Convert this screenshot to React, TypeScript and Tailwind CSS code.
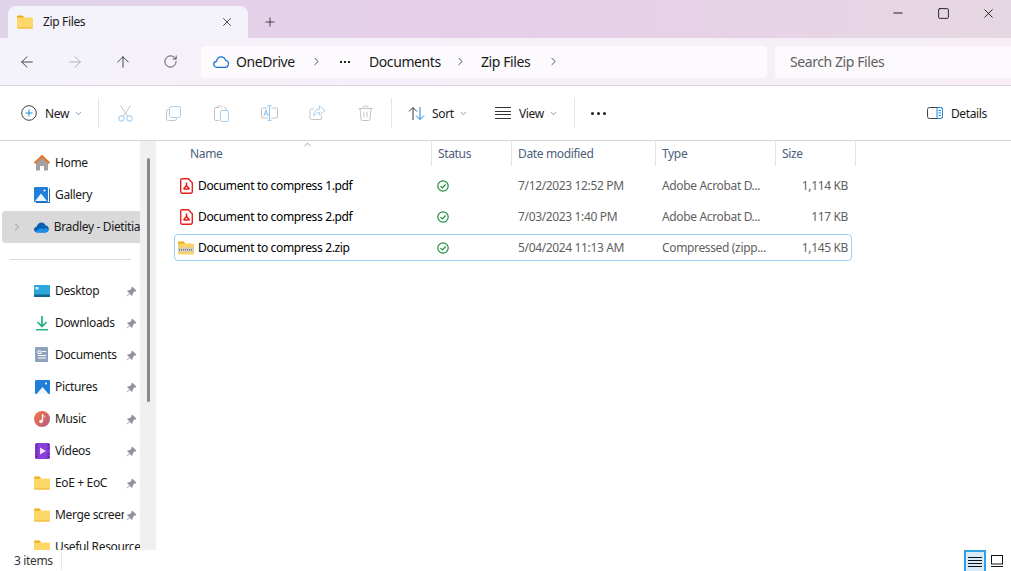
import { ArrowLeft, ArrowRight, ArrowUp, ChevronDown, ChevronRight, Minus, Plus, RotateCw, Square, X } from 'lucide-react';

function FolderIcon({ size = 16 }: { size?: number }) {
  return (
    <svg width={size} height={size} viewBox="0 0 16 16">
      <path d="M0 3C0 2.200.6 1.600 1.400 1.600h4l1.600 1.500v2H0z" fill="#eeaa10" />
      <path d="M0 4.500c0-.6.500-1 1-1h14c.6 0 1 .5 1 1v9c0 .6-.4 1-1 1H1c-.6 0-1-.4-1-1z" fill="#fdd868" />
      <path d="M.5 14h15" stroke="#eeb42c" strokeWidth="1" />
    </svg>
  );
}

function PdfIcon() {
  return (
    <svg width="13" height="16" viewBox="0 0 13 16" fill="none">
      <path d="M2 .7h6.300l4 4V13.300c0 1.100-.7 1.900-1.700 1.900H2C1.100 15.200.7 14.400.7 13.300V2.200C.7 1.300 1.100.7 2 .7z" fill="#fff" stroke="#e8201c" strokeWidth="1.400" />
      <path d="M6.500 4.500v3L3.500 11M6.500 7.500l3 3.500M3.500 11h6" stroke="#e8201c" strokeWidth="1.500" />
    </svg>
  );
}

function ZipIcon() {
  return (
    <svg width="16" height="16" viewBox="0 0 16 16">
      <path d="M0 2.500C0 1.900.4 1.500 1 1.500h4.500L7 3V6H0z" fill="#eeaa10" />
      <path d="M0 4.500c0-.6.400-1 1-1h14c.6 0 1 .4 1 1v9c0 .6-.4 1-1 1H1c-.6 0-1-.4-1-1z" fill="#fbd266" />
      <rect x="0" y="7.500" width="16" height="4.500" fill="#d3cebf" />
      <path d="M1 9.700h14" stroke="#77746c" strokeWidth="1.400" strokeDasharray="1 1" />
    </svg>
  );
}

function PinIcon() {
  return (
    <svg width="11" height="11" viewBox="0 0 11 11" fill="#8f949a">
      <path d="M6.200.6 10.400 4.800 9.600 5.500 8.800 5.300 6.800 7.300 6.700 9.100 5.900 9.900 3.700 7.700 1 10.400.6 10 3.300 7.300 1.100 5.100 1.900 4.300 3.700 4.200 5.700 2.200 5.500 1.400z" />
    </svg>
  );
}

function HomeIcon() {
  return (
    <svg width="16" height="16" viewBox="0 0 16 16">
      <path d="M2 7 8 2l6 5v8.500H10v-4.500H6v4.500H2z" fill="#a4a0a0" />
      <path d="M.7 8.200 8 1.300l7.300 6.900" fill="none" stroke="#e3742a" strokeWidth="2.200" />
    </svg>
  );
}

function GalleryIcon() {
  return (
    <svg width="16" height="16" viewBox="0 0 16 16">
      <rect x="0" y="0" width="14" height="15" rx="1" fill="#1f7fd8" />
      <path d="M1 14 7 6.500 13 14z" fill="#e9f3fb" />
      <circle cx="10.500" cy="3.500" r="1" fill="#fff" />
      <path d="M15.500 1.500V15.500H2" fill="none" stroke="#2469b0" strokeWidth="1" />
    </svg>
  );
}

function CloudFilled() {
  return (
    <svg width="16" height="11" viewBox="0 0 16 11">
      <path d="M3.400 10.800C1.500 10.800 0 9.500 0 7.800c0-1.600 1.200-2.800 2.800-3C3.600 2 5.800.2 8 .2c2.100 0 3.900 1.200 4.700 3.200 1.900.1 3.300 1.700 3.300 3.600 0 2.200-1.600 3.800-3.700 3.800z" fill="#0c5fb3" />
      <path d="M1.500 10.500c1-2.500 5-5 8.500-3.500 2-1 4-1 6 .5-.3 2-1.900 3.300-3.700 3.300H3.400z" fill="#1c90e8" />
    </svg>
  );
}

function CloudOutline() {
  return (
    <svg width="16" height="12" viewBox="0 0 16 12" fill="none">
      <path d="M3.800 11.300C2 11.300.7 10 .7 8.300c0-1.600 1.200-2.900 2.800-3C4 2.600 5.900.8 8 .8c2.300 0 4 1.400 4.600 3.500 1.600.2 2.800 1.600 2.800 3.400 0 2-1.500 3.600-3.400 3.600z" stroke="#1673cf" strokeWidth="1.200" />
    </svg>
  );
}

function DesktopIcon() {
  return (
    <svg width="16" height="12" viewBox="0 0 16 12">
      <rect width="16" height="12" rx="1" fill="#2aa7dd" />
      <rect y="9.500" width="16" height="2.500" fill="#12688f" />
      <rect x="1.500" y="2" width="3" height="2.500" fill="#d6f0fa" />
    </svg>
  );
}

function DownloadIcon() {
  return (
    <svg width="14" height="16" viewBox="0 0 14 16" fill="none">
      <path d="M7 1v10M2.500 7 7 11.500 11.500 7" stroke="#20b27f" strokeWidth="1.700" />
      <path d="M1 14.700h12" stroke="#20b27f" strokeWidth="1.500" />
    </svg>
  );
}

function DocumentsIcon() {
  return (
    <svg width="14" height="16" viewBox="0 0 14 16">
      <rect width="13" height="15" rx="1" fill="#8fa2bd" />
      <path d="M3 4h3v2.500H3zM7 4.500h4M3 8.500h8M3 11h8" stroke="#fff" strokeWidth="1" fill="none" />
    </svg>
  );
}

function PicturesIcon() {
  return (
    <svg width="15" height="15" viewBox="0 0 15 15">
      <rect width="15" height="14" rx="1" fill="#1f7fd8" />
      <path d="M1.500 14 7.500 7l6 7z" fill="#eef6fc" />
      <circle cx="11" cy="3.500" r="1" fill="#fff" />
    </svg>
  );
}

function MusicIcon() {
  return (
    <svg width="16" height="16" viewBox="0 0 16 16">
      <defs>
        <linearGradient id="music" x1="0" y1="0" x2="1" y2="1">
          <stop offset="0" stopColor="#ef7a3a" />
          <stop offset="1" stopColor="#b9588f" />
        </linearGradient>
      </defs>
      <circle cx="8" cy="8" r="8" fill="url(#music)" />
      <path d="M8.500 3.500V10" stroke="#fff" strokeWidth="1.300" />
      <path d="M8.500 3.500c.5 1.500 2 1.500 2.500 3" stroke="#fff" strokeWidth="1" fill="none" />
      <circle cx="7" cy="10.500" r="1.700" fill="#fff" />
    </svg>
  );
}

function VideosIcon() {
  return (
    <svg width="15" height="16" viewBox="0 0 15 16">
      <rect width="15" height="16" rx="1.500" fill="#8a3fd8" />
      <path d="M5 4.500 11 8l-6 3.500z" fill="#efe3fb" />
      <path d="M1 2h1.500M1 5h1.500M1 8h1.500M1 11h1.500M1 14h1.500M12.500 2H14M12.500 5H14M12.500 11H14M12.500 14H14" stroke="#2a1560" strokeWidth="1.200" />
    </svg>
  );
}

function CheckCircle() {
  return (
    <svg width="12" height="12" viewBox="0 0 12 12" fill="none">
      <circle cx="6" cy="6" r="5.200" stroke="#1e8e3e" strokeWidth="1.200" />
      <path d="M3.500 6.200 5.300 8l3.300-3.500" stroke="#1e8e3e" strokeWidth="1.200" />
    </svg>
  );
}

function SortIcon() {
  return (
    <svg width="17" height="15" viewBox="0 0 17 15" fill="none">
      <path d="M5 14V1.500M1 5.500 5 1.500 9 5.500" stroke="#3a3a3a" strokeWidth="1" />
      <path d="M12 1v12.500M8 9.500l4 4 4-4" stroke="#1a86d8" strokeWidth="1" />
    </svg>
  );
}

function CutIcon() {
  return (
    <svg width="15" height="17" viewBox="0 0 15 17" fill="none">
      <path d="M2.500 .5 9.500 11M12.500 .5 5.500 11" stroke="#c4c4c4" />
      <circle cx="3.500" cy="13.500" r="2.700" stroke="#8fc3ee" />
      <circle cx="11.500" cy="13.500" r="2.700" stroke="#8fc3ee" />
    </svg>
  );
}

function CopyIcon() {
  return (
    <svg width="15" height="15" viewBox="0 0 15 15" fill="none">
      <path d="M3 3.500H2.500A2 2 0 0 0 .5 5.500v7a2 2 0 0 0 2 2h6a2 2 0 0 0 2-2V12" stroke="#c4c4c4" />
      <rect x="3.500" y=".5" width="11" height="11" rx="2" stroke="#a9cfee" />
    </svg>
  );
}

function PasteIcon() {
  return (
    <svg width="15" height="17" viewBox="0 0 15 17" fill="none">
      <path d="M5 2.500H2A1.500 1.500 0 0 0 .5 4v10A1.500 1.500 0 0 0 2 15.500h3M3 2.500A1.500 1.500 0 0 1 4.500 1h2A1.500 1.500 0 0 1 8 2.500M10 2.500h.5A1.500 1.500 0 0 1 12 4v1" stroke="#c4c4c4" />
      <rect x="6.500" y="5.500" width="8" height="11" rx="1.500" stroke="#a9cfee" />
    </svg>
  );
}

function RenameIcon() {
  return (
    <svg width="17" height="16" viewBox="0 0 17 16" fill="none" stroke="#8fc3ee">
      <path d="M6.500 3h-5A1 1 0 0 0 .5 4v8a1 1 0 0 0 1 1h5M10.500 3h5a1 1 0 0 1 1 1v8a1 1 0 0 1-1 1h-5" stroke="#c4c4c4" />
      <path d="M8.500 1v14M6.500.7h4M6.500 15.300h4" />
      <path d="M2.800 11 5 5l2.200 6M3.600 9h2.800" />
    </svg>
  );
}

function ShareIcon() {
  return (
    <svg width="17" height="16" viewBox="0 0 17 16" fill="none">
      <path d="M12.500 10.500V13a1.500 1.500 0 0 1-1.500 1.500H2.500A1.500 1.500 0 0 1 1 13V5.500A1.500 1.500 0 0 1 2.500 4H5" stroke="#c4c4c4" />
      <path d="M10.500 1 16 5.500 10.500 10V7.500C8 7.500 6 8.500 4.500 11c0-4 2-6.500 6-6.800z" stroke="#a9cfee" />
    </svg>
  );
}

function TrashIcon() {
  return (
    <svg width="15" height="16" viewBox="0 0 15 16" fill="none" stroke="#c4c4c4">
      <path d="M.5 3.500h14M5 3.500V2.500A1.500 1.500 0 0 1 6.500 1h2A1.500 1.500 0 0 1 10 2.500v1M2 3.500l1 10.500a1.500 1.500 0 0 0 1.500 1.500h6A1.500 1.500 0 0 0 12 14l1-10.500M6 6.500v6M9 6.500v6" />
    </svg>
  );
}

function ViewIcon() {
  return (
    <svg width="16" height="12" viewBox="0 0 16 12" stroke="#333" strokeWidth="1">
      <path d="M0 .5h16M0 4.500h16M0 7.500h16M0 11.500h16" />
    </svg>
  );
}

function DetailsIcon() {
  return (
    <svg width="16" height="12" viewBox="0 0 16 12" fill="none">
      <rect x=".5" y=".5" width="15" height="11" rx="2" stroke="#444" />
      <path d="M10 .5h3.500a2 2 0 0 1 2 2v7a2 2 0 0 1-2 2H10z" fill="#fff" stroke="#1a86d8" />
      <path d="M11.500 3.500h2.500M11.500 6h2.500M11.500 8.500h2.500" stroke="#1a86d8" />
    </svg>
  );
}

const pinned = [
  { label: 'Desktop', icon: <DesktopIcon /> },
  { label: 'Downloads', icon: <DownloadIcon /> },
  { label: 'Documents', icon: <DocumentsIcon /> },
  { label: 'Pictures', icon: <PicturesIcon /> },
  { label: 'Music', icon: <MusicIcon /> },
  { label: 'Videos', icon: <VideosIcon /> },
  { label: 'EoE + EoC', icon: <FolderIcon /> },
  { label: 'Merge screenshots', icon: <FolderIcon /> },
];

const files = [
  { name: 'Document to compress 1.pdf', icon: <PdfIcon />, date: '7/12/2023 12:52 PM', type: 'Adobe Acrobat D...', size: '1,114 KB' },
  { name: 'Document to compress 2.pdf', icon: <PdfIcon />, date: '7/03/2023 1:40 PM', type: 'Adobe Acrobat D...', size: '117 KB' },
  { name: 'Document to compress 2.zip', icon: <ZipIcon />, date: '5/04/2024 11:13 AM', type: 'Compressed (zipp...', size: '1,145 KB', selected: true },
];

function NavItem({ label, icon, pin }: { label: string; icon: React.ReactNode; pin?: boolean }) {
  return (
    <div className="h-8 flex items-center text-[12px] text-[#1a1a1a]">
      <div className="w-[34px] shrink-0" />
      <div className="w-4 shrink-0 flex items-center justify-center">{icon}</div>
      <span className="ml-[5px] flex-1 min-w-0 overflow-hidden whitespace-nowrap">{label}</span>
      {pin && <div className="w-[16px] pl-[2px] shrink-0"><PinIcon /></div>}
    </div>
  );
}

export default function App() {
  return (
    <div className="w-[1011px] h-[571px] overflow-hidden flex flex-col bg-white text-[#1a1a1a] tracking-[-0.35px] font-['Noto_Sans',sans-serif]">
      {/* Title bar */}
      <div className="h-[38px] shrink-0 flex items-end pl-2 bg-gradient-to-r from-[#dfd3e9] via-[#e7cee9] to-[#e6d8e2]">
        <div className="w-[240px] h-8 rounded-t-lg bg-[#f4f2fa] flex items-center pl-[9px] pr-[14px]">
          <FolderIcon />
          <span className="ml-[10px] flex-1 text-[12px]">Zip Files</span>
          <X size={14} strokeWidth={1.3} />
        </div>
        <div className="ml-[15px] h-8 flex items-center"><Plus size={14} strokeWidth={1.3} /></div>
        <div className="flex-1" />
        <div className="h-[38px] pb-[12px] flex items-center text-black">
          <div className="w-[46px] flex justify-center"><Minus size={14} strokeWidth={1.5} /></div>
          <div className="w-[44px] flex justify-center"><Square size={13} strokeWidth={1.5} /></div>
          <div className="w-[46px] flex justify-center"><X size={15} strokeWidth={1.3} /></div>
        </div>
      </div>

      {/* Address row */}
      <div className="h-[48px] shrink-0 flex items-center border-b border-[#dcd0de] bg-gradient-to-r from-[#f4f2fa] via-[#f6f0f9] to-[#f7eef5]">
        <div className="w-[201px] shrink-0 flex items-center pl-[3px]">
          <div className="w-12 flex justify-center"><ArrowLeft size={18} strokeWidth={1.2} color="#333" /></div>
          <div className="w-12 flex justify-center"><ArrowRight size={18} strokeWidth={1.2} color="#aaa" /></div>
          <div className="w-[47px] flex justify-center"><ArrowUp size={18} strokeWidth={1.2} color="#333" /></div>
          <div className="w-[49px] flex justify-center"><RotateCw size={15} strokeWidth={1.3} color="#333" /></div>
        </div>
        <div className="w-[566px] h-8 rounded bg-[#fcfafd] flex items-center pl-[12px] text-[14px] leading-none tracking-[-0.42px]">
          <CloudOutline />
          <span className="ml-[7px] w-[74px]">OneDrive</span>
          <ChevronRight size={13} strokeWidth={1.4} />
          <div className="ml-[17px] w-[12px] flex gap-[2px]">
            <div className="w-[2px] h-[2px] bg-[#222]" />
            <div className="w-[2px] h-[2px] bg-[#222]" />
            <div className="w-[2px] h-[2px] bg-[#222]" />
          </div>
          <span className="ml-[17px] w-[85px]">Documents</span>
          <ChevronRight size={13} strokeWidth={1.4} />
          <span className="ml-[14px] w-[66px]">Zip Files</span>
          <ChevronRight size={13} strokeWidth={1.4} />
        </div>
        <div className="ml-2 flex-1 h-8 rounded-l bg-[#fcf9fd] flex items-center pl-[15px] text-[14px] tracking-[-0.42px] text-[#5f5f5f]">Search Zip Files</div>
      </div>

      {/* Command bar */}
      <div className="h-[55px] shrink-0 flex items-center border-b border-[#dcd0de] text-[12px]">
        <div className="w-[98px] shrink-0 flex items-center pl-[21px]">
          <svg width="16" height="16" viewBox="0 0 16 16" fill="none">
            <circle cx="8" cy="8" r="7.300" stroke="#444" />
            <path d="M8 4.500v7M4.500 8h7" stroke="#1a86d8" />
          </svg>
          <span className="ml-2 mt-px">New</span>
          <ChevronDown size={9} className="ml-[5px]" color="#777" />
        </div>
        <div className="w-px h-[30px] bg-[#e6e6e6]" />
        <div className="w-[2px]" />
        <div className="w-12 flex justify-center"><CutIcon /></div>
        <div className="w-12 flex justify-center"><CopyIcon /></div>
        <div className="w-12 flex justify-center"><PasteIcon /></div>
        <div className="w-12 flex justify-center"><RenameIcon /></div>
        <div className="w-12 flex justify-center"><ShareIcon /></div>
        <div className="w-12 flex justify-center"><TrashIcon /></div>
        <div className="ml-[2px] w-px h-[30px] bg-[#e6e6e6]" />
        <div className="ml-4 flex items-center w-[80px]">
          <SortIcon />
          <span className="ml-[7px] mt-px">Sort</span>
          <ChevronDown size={9} className="ml-[5px]" color="#777" />
        </div>
        <div className="ml-[7px] flex items-center w-[79px]">
          <ViewIcon />
          <span className="ml-2 mt-px">View</span>
          <ChevronDown size={9} className="ml-[5px]" color="#777" />
        </div>
        <div className="w-px h-[30px] bg-[#e6e6e6]" />
        <div className="ml-[16px] flex gap-[3px]">
          <div className="w-[3px] h-[3px] rounded-full bg-[#222]" />
          <div className="w-[3px] h-[3px] rounded-full bg-[#222]" />
          <div className="w-[3px] h-[3px] rounded-full bg-[#222]" />
        </div>
        <div className="flex-1" />
        <DetailsIcon />
        <span className="ml-2 mr-6 mt-px">Details</span>
      </div>

      {/* Body */}
      <div className="flex-1 min-h-0 flex">
        <div className="w-[140px] shrink-0 pt-[6px] overflow-hidden">
          <NavItem label="Home" icon={<HomeIcon />} />
          <NavItem label="Gallery" icon={<GalleryIcon />} />
          <div className="h-8 ml-[2px] rounded-l bg-[#d9d9d9] flex items-center text-[12px]">
            <div className="w-[32px] shrink-0 pl-[9px]"><ChevronRight size={12} strokeWidth={1.4} color="#777" /></div>
            <CloudFilled />
            <span className="ml-[5px] overflow-hidden whitespace-nowrap">Bradley - Dietitian</span>
          </div>
          <div className="h-8 flex items-center pl-[10px] pr-[9px]"><div className="w-full h-px bg-[#d9d9d9]" /></div>
          {pinned.map((p) => <NavItem key={p.label} label={p.label} icon={p.icon} pin />)}
          <NavItem label="Useful Resources" icon={<FolderIcon />} />
        </div>
        <div className="w-[16px] shrink-0 bg-[#f0f0f0] pt-[17px] pl-[7px]">
          <div className="w-[3px] h-[244px] rounded-full bg-[#8a8a8a]" />
        </div>
        <div className="flex-1 min-w-0 pl-[18px] text-[12px]">
          <div className="relative h-[25px] w-[682px] flex text-[#4c607a]">
            <ChevronDown size={11} strokeWidth={1.2} color="#555" className="absolute left-[128px] -top-[2px] rotate-180" />
            <div className="w-[258px] border-r border-[#e5e5e5] pl-[16px] flex items-center">Name</div>
            <div className="w-[80px] border-r border-[#e5e5e5] pl-[6px] flex items-center">Status</div>
            <div className="w-[144px] border-r border-[#e5e5e5] pl-[6px] flex items-center">Date modified</div>
            <div className="w-[120px] border-r border-[#e5e5e5] pl-[6px] flex items-center">Type</div>
            <div className="w-[80px] border-r border-[#e5e5e5] pl-[6px] flex items-center">Size</div>
          </div>
          <div className="mt-[6px] flex flex-col gap-[4px]">
            {files.map((f) => (
              <div key={f.name} className={`h-[27px] w-[678px] flex items-center rounded-sm border ${f.selected ? 'border-[#99d1f7]' : 'border-transparent'}`}>
                <div className={f.selected ? 'w-[23px] pl-[3px]' : 'w-[23px] pl-[5px]'}>{f.icon}</div>
                <span className="w-[239px] text-black">{f.name}</span>
                <div className="w-[81px]"><CheckCircle /></div>
                <span className="w-[144px] text-[#5f5f5f]">{f.date}</span>
                <span className="w-[120px] text-[#5f5f5f] whitespace-nowrap">{f.type}</span>
                <span className="flex-1 text-right pr-[3px] text-[#5f5f5f]">{f.size}</span>
              </div>
            ))}
          </div>
        </div>
      </div>

      {/* Status bar */}
      <div className="h-[21px] shrink-0 flex items-center text-[12px] text-[#333] pl-[14px]">
        <span className="w-[48px] border-r border-[#e8e8e8]">3 items</span>
        <div className="flex-1" />
        <div className="w-[22px] h-[21px] border-2 border-b-0 border-[#2fa3e6] bg-[#d8ebf7] flex items-center justify-center">
          <svg width="14" height="12" viewBox="0 0 14 12" stroke="#111"><path d="M0 1.500h14M0 4.500h14M0 7.500h14M0 10.500h14" /></svg>
        </div>
        <div className="ml-[2px] mr-[5px] w-[18px] h-[21px] flex items-center justify-center">
          <svg width="12" height="12" viewBox="0 0 12 12" fill="none" stroke="#111"><rect x=".5" y=".5" width="11" height="8.500" /><path d="M0 11.500h12" /></svg>
        </div>
      </div>
    </div>
  );
}
